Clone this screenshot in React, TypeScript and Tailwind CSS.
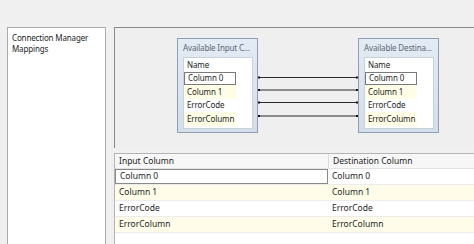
const rows = ["Column 0", "Column 1", "ErrorCode", "ErrorColumn"]

function ColumnBox({ title }: { title: string }) {
  return (
    <div className="w-[81px] h-[95px] border border-[#8e9fb5] bg-gradient-to-b from-[#e3ebf4] to-[#d3deea] pl-[5px] pr-[4px] flex flex-col">
      <div className="h-[18px] flex items-center text-[#5d6775] whitespace-nowrap overflow-hidden text-[8px] tracking-[-0.15px]">
        {title}
      </div>
      <div className="flex-1 bg-white border border-[#c9d3de] mb-[3px] flex flex-col text-[8px] tracking-[-0.1px]">
        <div className="h-[13.5px] flex items-center pl-[3px] text-[#222]">Name</div>
        {rows.map((r, i) => (
          <div
            key={r}
            className={
              "h-[13.5px] w-[52px] flex items-center pl-[3px] " +
              (i === 0
                ? "border border-[#7a7a7a] bg-white"
                : i % 2 === 1
                ? "bg-[#fffde6]"
                : "bg-white")
            }
          >
            {r}
          </div>
        ))}
      </div>
    </div>
  )
}

function Links() {
  const ys = [39.5, 52, 64.5, 78]
  return (
    <svg width="100" height="95" className="shrink-0">
      {ys.map((y) => (
        <g key={y}>
          <line x1="0" y1={y} x2="100" y2={y} stroke="#2a2a2a" strokeWidth="1.2" />
          <rect x="0" y={y - 1} width="2" height="2" fill="#111" />
          <rect x="98" y={y - 1} width="2" height="2" fill="#111" />
        </g>
      ))}
    </svg>
  )
}

export default function App() {
  return (
    <div
      className="w-[474px] h-[244px] overflow-hidden bg-[#f0f0f0] text-[8.5px] text-[#1e1e1e] leading-none"
      style={{ fontFamily: '"Noto Sans", "Open Sans", sans-serif' }}
    >
      <div className="h-[27px]" />
      <div className="flex items-start">
        <div className="ml-[7px] w-[99px] h-[230px] bg-white border border-[#ababab] px-[4px] pt-[4px] text-[8px] tracking-[-0.15px] leading-[11px] whitespace-nowrap">
          Connection Manager
          <br />
          Mappings
        </div>
        <div className="ml-[8px] flex-1 flex flex-col">
          <div className="h-[121px] border-t border-l border-[#8a8a8a] bg-[#efefef] pl-[62px] pt-[10px] flex items-start">
            <ColumnBox title="Available Input C..." />
            <Links />
            <ColumnBox title="Available Destina..." />
          </div>
          <div className="mt-[5px] h-[100px] bg-white border-t border-l border-[#b4b4b4]">
            <div className="h-[15px] flex bg-[#f7f7f7] border-b border-[#e2e2e2]">
              <div className="w-[213px] pl-[4px] flex items-center">Input Column</div>
              <div className="flex-1 pl-[4px] flex items-center border-l border-[#dcdcdc]">
                Destination Column
              </div>
            </div>
            {rows.map((r, i) => (
              <div
                key={r}
                className={
                  "h-[16px] flex border-b border-[#ececec] " +
                  (i % 2 === 1 ? "bg-[#fffde9]" : "bg-white")
                }
              >
                <div
                  className={
                    "w-[213px] pl-[4px] flex items-center " +
                    (i === 0 ? "border border-[#8a8a8a]" : "")
                  }
                >
                  {r}
                </div>
                <div className="flex-1 pl-[4px] flex items-center">{r}</div>
              </div>
            ))}
          </div>
        </div>
      </div>
    </div>
  )
}
